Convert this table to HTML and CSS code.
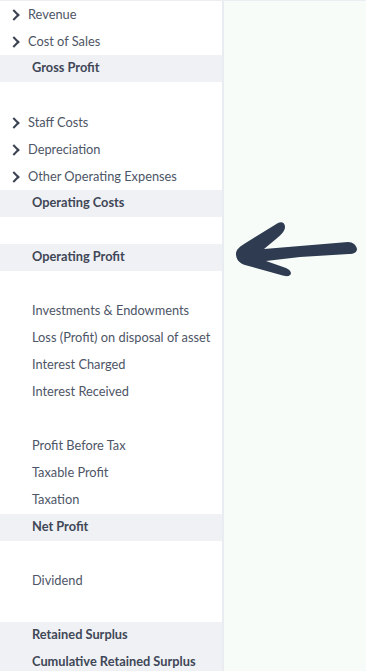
FILE: index.html
```html
<!DOCTYPE html>
<html lang="en">
<head>
    <meta charset="UTF-8">
    <meta name="viewport" content="width=device-width, initial-scale=1.0">
    <title>Profit and Loss</title>
    <link rel="stylesheet" href="styles.css">
</head>
<body>
    <div class="layout">
        <ul class="pl_rows">
            <li class="group"><span class="chev"></span>Revenue</li>
            <li class="group"><span class="chev"></span>Cost of Sales</li>
            <li class="total">Gross Profit</li>
            <li class="blank"></li>
            <li class="group"><span class="chev"></span>Staff Costs</li>
            <li class="group"><span class="chev"></span>Depreciation</li>
            <li class="group"><span class="chev"></span>Other Operating Expenses</li>
            <li class="total">Operating Costs</li>
            <li class="blank"></li>
            <li class="total">Operating Profit</li>
            <li class="blank"></li>
            <li class="item">Investments &amp; Endowments</li>
            <li class="item">Loss (Profit) on disposal of asset</li>
            <li class="item">Interest Charged</li>
            <li class="item">Interest Received</li>
            <li class="blank"></li>
            <li class="item">Profit Before Tax</li>
            <li class="item">Taxable Profit</li>
            <li class="item">Taxation</li>
            <li class="total">Net Profit</li>
            <li class="blank"></li>
            <li class="item">Dividend</li>
            <li class="blank"></li>
            <li class="total">Retained Surplus</li>
            <li class="total">Cumulative Retained Surplus</li>
        </ul>
        <div class="grid_area"></div>
    </div>

    <!-- hand drawn pointer -->
    <svg class="pointer" width="366" height="671" viewBox="0 0 366 671">
        <path d="M236 254 C236 250 239 247 244 244 L278 223 C282 221 285 223 285 227 C285 231 281 235 276 239 L264 249
                 L300 246 L348 242 C353 242 356 245 357 249 C357 252 354 254 349 254 L300 257 L266 261
                 L286 268 C291 270 292 274 290 275 C288 277 285 276 281 275 L245 265 C239 263 236 259 236 254 Z"
              fill="#2e3b50"/>
    </svg>
</body>
</html>
```

FILE: styles.css
```css
* {margin: 0; padding: 0; box-sizing: border-box;}
body {
    font-family: "Source Sans Pro", Lato, "Noto Sans", sans-serif;
    font-size: 12.8px;
    color: #4d5566;
    background: #f7fcf9;
}
.layout {
    display: flex;
    height: 671px;
    overflow: hidden;
    border-top: 1px solid #eceef2;
}
.pl_rows {
    list-style: none;
    width: 224px;
    flex-shrink: 0;
    background: #fff;
    border-right: 2px solid #e9ecf0;
}
.pl_rows li {
    height: 27px;
    line-height: 25px;
    white-space: nowrap;
    padding-left: 32px;
}
.pl_rows li.group {
    padding-left: 10px;
    display: flex;
    align-items: center;
}
.pl_rows li.total {
    background: #eff1f5;
    font-weight: bold;
    color: #3f4757;
}
.chev {
    width: 8px;
    height: 8px;
    border-right: 2px solid #3a4252;
    border-bottom: 2px solid #3a4252;
    transform: rotate(-45deg);
    margin-right: 10px;
}
.grid_area {
    flex: 1;
}
.pointer {
    position: absolute;
    top: 0;
    left: 0;
    pointer-events: none;
}
```
